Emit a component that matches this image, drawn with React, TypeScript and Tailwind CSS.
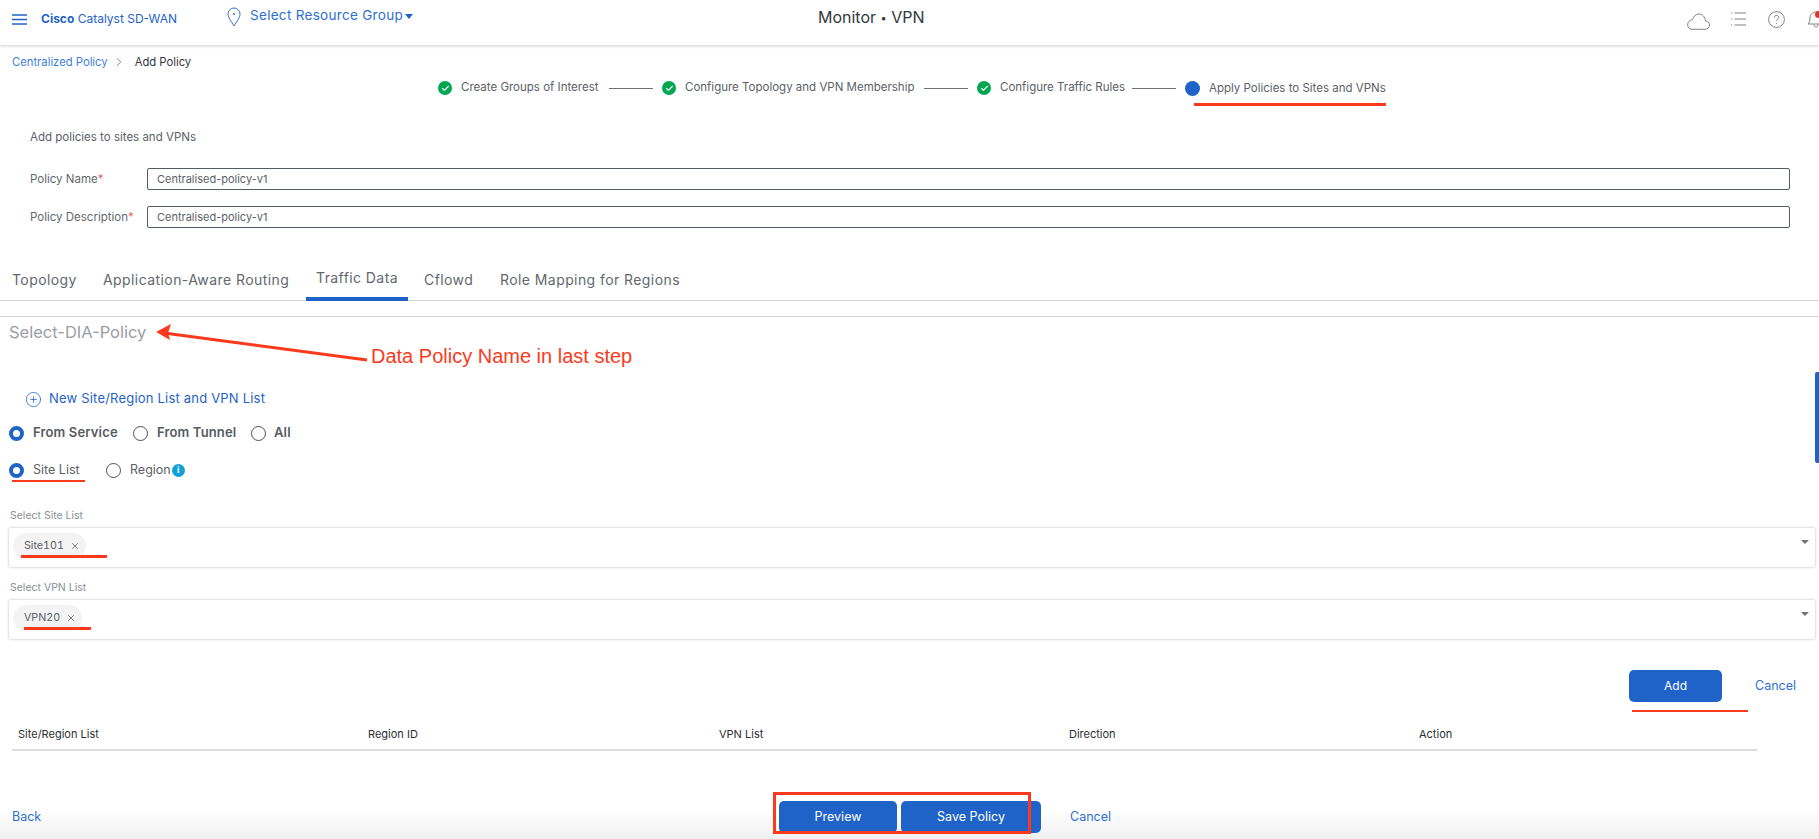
import { Check, ChevronRight, CirclePlus, X } from 'lucide-react';

const steps = [
  { label: 'Create Groups of Interest', w: 'w-[138px]' },
  { label: 'Configure Topology and VPN Membership', w: 'w-[229px]' },
  { label: 'Configure Traffic Rules', w: 'w-[122px]' },
];

const tabs = [
  { label: 'Topology', cls: 'w-[87px] pl-3' },
  { label: 'Application-Aware Routing', cls: 'w-[219px] pl-[16px]' },
  { label: 'Traffic Data', cls: 'w-[102px] justify-center border-b-4 border-[#1f63c9]' },
  { label: 'Cflowd', cls: 'w-[92px] pl-[16px]' },
  { label: 'Role Mapping for Regions', cls: 'pl-0' },
];

function Radio({ on }: { on?: boolean }) {
  if (on) return <span className="w-[15px] h-[15px] rounded-full border-[4px] border-[#1f63c9] bg-white shrink-0" />;
  return <span className="w-[15px] h-[15px] rounded-full border border-[#4a4f55] bg-white shrink-0" />;
}

function StepDone() {
  return (
    <span className="w-[14px] h-[14px] rounded-full bg-[#00a652] flex items-center justify-center shrink-0">
      <Check className="w-[9px] h-[9px] text-white" strokeWidth={3} />
    </span>
  );
}

function TextRow({ label, value }: { label: string; value: string }) {
  return (
    <div className="flex items-center h-[22px] pl-[30px] pr-[29px]">
      <span className="w-[117px] pt-[2px] text-[11.5px] text-[#62686e]">
        {label}
        <span className="text-[#e2352a] font-light">*</span>
      </span>
      <div className="flex-1 h-full border border-[#555c63] rounded-[2px] flex items-center pl-[9px] text-[11px] text-[#5b6167]">
        {value}
      </div>
    </div>
  );
}

function MultiSelect({ label, chip, chipW, textW, mark }: { label: string; chip: string; chipW: string; textW: string; mark: string }) {
  return (
    <div>
      <div className="h-[13px] pl-[10px] flex items-center text-[10.5px] text-[#8a8f95]">{label}</div>
      <div className="relative mt-[6px] ml-[9px] mr-[4px] h-[39px] bg-white rounded-[2px] shadow-[0_0_3px_rgba(0,0,0,0.28)] flex pl-[4px] pt-[5px]">
        <span className={`${chipW} h-[26px] rounded-full bg-[#f3f3f3] flex items-center pl-[11px] text-[10.7px] tabular-nums text-[#5b6167]`}>
          <span className={textW}>{chip}</span>
          <X className="w-[10px] h-[10px] text-[#50565c]" strokeWidth={1.8} />
        </span>
        <span className="absolute right-[6px] top-[12px] w-0 h-0 border-x-[4px] border-x-transparent border-t-[4px] border-t-[#6f7479]" />
        <span className={`absolute top-[27px] h-[3px] bg-[#fb3a1d] ${mark}`} />
      </div>
    </div>
  );
}

export default function App() {
  return (
    <div className="relative w-full h-[839px] overflow-hidden bg-white font-['Inter',sans-serif]">
      {/* top bar */}
      <header className="h-[45px] flex items-start shadow-[0_1px_3px_rgba(0,0,0,0.2)]">
        <svg className="ml-3 mt-[14px] w-[15px] h-[11px]" viewBox="0 0 15 11">
          <path d="M0 1h15M0 5.5h15M0 10h15" stroke="#1f63c9" strokeWidth="1.6" />
        </svg>
        <span className="ml-[14px] mt-[11px] text-[12px] leading-[16px] text-[#1f63c9] w-[146px] whitespace-nowrap">
          <b>Cisco</b> Catalyst SD-WAN
        </span>
        <svg className="ml-[40px] mt-[7px] w-[14px] h-[20px]" viewBox="0 0 14 20" fill="none">
          <path d="M7 19C4 14 1 10.500 1 7a6 6 0 0 1 12 0c0 3.500-3 7-6 12Z" stroke="#1f63c9" strokeWidth="0.9" />
          <circle cx="7" cy="7" r="0.9" fill="#1f63c9" />
        </svg>
        <span className="ml-[9px] mt-[7px] text-[13.5px] leading-[17px] tracking-[0.3px] text-[#2d6fd0]">Select Resource Group</span>
        <span className="ml-[2px] mt-[14px] w-0 h-0 border-x-[4px] border-x-transparent border-t-[5px] border-t-[#1f63c9]" />
        <span className="ml-[405px] mt-[7px] text-[16px] leading-[20px] text-[#34383d]">
          Monitor <span className="text-[11px] align-[1px]">•</span> VPN
        </span>
        <div className="ml-auto flex items-start">
          <svg className="mt-[13px] w-[23px] h-[17px]" viewBox="0 0 23 17" fill="none" stroke="#5f6368" strokeWidth="0.8">
            <path d="M5.500 16.300h12.500c2.500 0 4.500-1.800 4.500-4.200 0-2.300-1.800-4-4-4.100C18 4 15.500 1 12 1 8.800 1 6.300 3.300 5.700 6.500 3 7 .6 9 .6 11.800c0 2.700 2 4.500 4.900 4.500Z" />
          </svg>
          <svg className="ml-[21px] mt-[12px] w-[15px] h-[14px]" viewBox="0 0 15 14" fill="none" stroke="#6b7075" strokeWidth="0.9">
            <path d="M3.500 1H15M3.500 7H15M3.500 13H15" />
            <path d="M0 1h1.200M0 7h1.200M0 13h1.200" />
          </svg>
          <svg className="ml-[22px] mt-[11px] w-[17px] h-[17px]" viewBox="0 0 17 17" fill="none" stroke="#5f6368" strokeWidth="0.8">
            <circle cx="8.500" cy="8.500" r="7.900" />
            <path d="M6.300 6.600c0-1.300 1-2.200 2.200-2.200 1.300 0 2.200.9 2.200 2 0 1.800-2.200 1.700-2.200 3.600" />
            <path d="M8.500 11.800v1" />
          </svg>
          <div className="relative ml-[22px] mt-[10px] w-[12px] h-[18px] overflow-hidden">
            <svg className="w-[18px] h-[18px]" viewBox="0 0 18 18" fill="none" stroke="#5f6368" strokeWidth="0.8">
              <path d="M1 14c1.500-1.500 2-3 2-6 0-3.500 2.500-6 6-6s6 2.500 6 6c0 3 .5 4.500 2 6Z" />
              <path d="M7 14.500c0 1.500 1 2.500 2 2.500s2-1 2-2.500" />
            </svg>
            <span className="absolute left-[8px] top-[1px] w-[7px] h-[7px] rounded-full bg-[#e2352a]" />
          </div>
        </div>
      </header>

      {/* breadcrumb */}
      <div className="mt-[8px] h-[18px] pl-3 flex items-center text-[11.25px]">
        <span className="text-[#3f7fd8]">Centralized Policy</span>
        <ChevronRight className="ml-[4px] mr-[9px] w-[14px] h-[14px] text-[#50565c]" strokeWidth={1.2} />
        <span className="text-[#33383d]">Add Policy</span>
      </div>

      {/* stepper */}
      <div className="mt-[8px] h-[18px] pl-[438px] flex items-center text-[11.5px] text-[#5b6167]">
        {steps.map((s) => (
          <div key={s.label} className="flex items-center">
            <StepDone />
            <span className={`ml-[9px] whitespace-nowrap ${s.w}`}>{s.label}</span>
            <span className="ml-[10px] mr-[9px] w-[44px] h-px bg-[#6d7278]" />
          </div>
        ))}
        <span className="w-[15px] h-[15px] rounded-full bg-[#1f63c9]" />
        <div className="relative ml-[9px] mt-[1px]">
          <span className="whitespace-nowrap">Apply Policies to Sites and VPNs</span>
          <span className="absolute left-[-15px] right-0 top-[23px] h-[3px] bg-[#fb3a1d]" />
        </div>
      </div>

      <div className="mt-[33px] h-4 pl-[30px] flex items-center text-[11.5px] text-[#5b6167]">Add policies to sites and VPNs</div>

      <div className="mt-[22px]">
        <TextRow label="Policy Name" value="Centralised-policy-v1" />
      </div>
      <div className="mt-[16px]">
        <TextRow label="Policy Description" value="Centralised-policy-v1" />
      </div>

      {/* tabs */}
      <div className="mt-[34px] h-[39px] flex border-b border-[#d5d7d9] text-[14px] tracking-[0.42px] text-[#62686e]">
        {tabs.map((t) => (
          <div key={t.label} className={`flex items-center h-[39px] pb-[4px] whitespace-nowrap ${t.cls}`}>
            {t.label}
          </div>
        ))}
      </div>

      <div className="mt-[15px] border-t border-[#d5d7d9]" />

      <div className="relative h-[30px] pl-[9px] flex items-center text-[16.5px] text-[#9a9ea3]">
        Select-DIA-Policy
        <svg className="absolute left-[150px] top-[4px] w-[225px] h-[44px]" viewBox="0 0 225 44">
          <path d="M14 12 L217 39" stroke="#fb3a1d" strokeWidth="3" />
          <path d="M6 11 L21 3 L18 12 L20 19 Z" fill="#fb3a1d" />
        </svg>
        <span className="absolute left-[371px] top-[27px] text-[20px] leading-[24px] text-[#fb3a1d] font-['Liberation_Sans',sans-serif] whitespace-nowrap">
          Data Policy Name in last step
        </span>
      </div>

      {/* radios and lists */}
      <div className="mt-[44px] h-4 pl-[25px] flex items-center text-[13px] tracking-[0.2px] text-[#1f63c9]">
        <CirclePlus className="w-[17px] h-[17px]" strokeWidth={1.1} />
        <span className="ml-[7px]">New Site/Region List and VPN List</span>
      </div>

      <div className="mt-[18px] h-4 pl-[9px] flex items-center text-[13px] tracking-[0.15px] font-semibold text-[#565c62]">
        <Radio on />
        <span className="ml-[9px] w-[100px] whitespace-nowrap">From Service</span>
        <Radio />
        <span className="ml-[9px] w-[94px] whitespace-nowrap">From Tunnel</span>
        <Radio />
        <span className="ml-[8px]">All</span>
      </div>

      <div className="relative mt-[21px] h-4 pl-[9px] flex items-center text-[12.5px] text-[#5b6167]">
        <Radio on />
        <span className="ml-[9px] w-[73px]">Site List</span>
        <Radio />
        <span className="ml-[9px]">Region</span>
        <span className="ml-[1px] w-[13px] h-[13px] rounded-full bg-[#11a0d8] text-white text-[9px] font-bold flex items-center justify-center">i</span>
        <span className="absolute left-[12px] top-[18px] w-[73px] h-[2px] bg-[#fb3a1d]" />
      </div>

      <div className="mt-[31px]">
        <MultiSelect label="Select Site List" chip="Site101" chipW="w-[73px]" textW="w-[46px]" mark="left-[12px] w-[86px]" />
      </div>
      <div className="mt-[14px]">
        <MultiSelect label="Select VPN List" chip="VPN20" chipW="w-[69px]" textW="w-[42px]" mark="left-[15px] w-[67px]" />
      </div>

      {/* add row */}
      <div className="mt-[31px] h-[32px] flex items-center justify-end pr-[23px]">
        <div className="relative w-[93px] h-[32px] rounded-[5px] bg-[#1f63c9] text-white text-[12px] flex items-center justify-center">
          Add
          <span className="absolute left-[3px] top-[40px] w-[116px] h-[2px] bg-[#fb3a1d]" />
        </div>
        <span className="ml-[33px] text-[12.5px] text-[#2d6fd0]">Cancel</span>
      </div>

      {/* table */}
      <div className="mt-[24px] ml-3 mr-[62px] h-[25px] pb-[9px] border-b-2 border-[#dcdee0] grid grid-cols-[356px_351px_350px_350px_1fr] items-center text-[11px] text-[#2b2f33]">
        <span className="pl-[6px]">Site/Region List</span>
        <span>Region ID</span>
        <span>VPN List</span>
        <span>Direction</span>
        <span>Action</span>
      </div>

      <div className="pointer-events-none absolute inset-x-0 bottom-0 h-[30px] bg-gradient-to-b from-transparent to-[#ededed]/80" />

      {/* footer actions */}
      <div className="relative mt-[50px] h-[32px] pl-3 flex items-center text-[12.5px] text-[#2d6fd0]">
        <span className="w-[767px]">Back</span>
        <span className="w-[118px] h-[32px] rounded-[5px] bg-[#1f63c9] text-white flex items-center justify-center">Preview</span>
        <span className="ml-[4px] w-[140px] h-[32px] rounded-[5px] bg-[#1f63c9] text-white flex items-center justify-center">Save Policy</span>
        <span className="ml-[29px]">Cancel</span>
        <span className="absolute left-[773px] top-[-9px] w-[258px] h-[42px] border-[3px] border-[#fb3a1d]" />
      </div>

      {/* page scroll thumb */}
      <span className="absolute right-0 top-[372px] w-[4px] h-[91px] rounded-l-[2px] bg-[#1f63c9]" />
    </div>
  );
}
